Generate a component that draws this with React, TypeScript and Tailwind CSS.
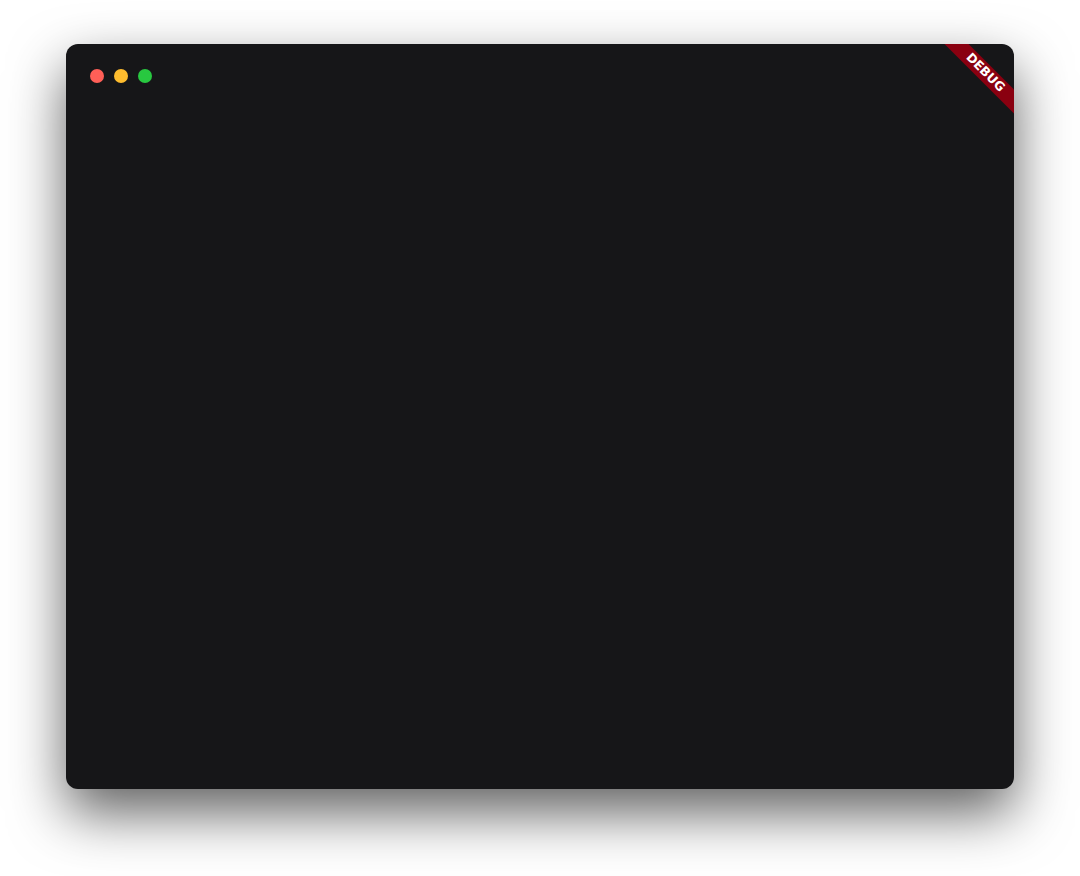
import React from "react";

export default function App() {
  return (
    <div className="w-[1080px] h-[876px] bg-white pt-[44px] pl-[66px]">
      <div className="relative w-[948px] h-[745px] rounded-[12px] overflow-hidden bg-[#161618] shadow-[0_24px_55px_rgba(0,0,0,0.62)]">
        <div className="flex gap-[10px] pt-[25px] pl-[24px]">
          <span className="w-[14px] h-[14px] rounded-full bg-[#ff5f57]" />
          <span className="w-[14px] h-[14px] rounded-full bg-[#febc2e]" />
          <span className="w-[14px] h-[14px] rounded-full bg-[#28c840]" />
        </div>
        <div
          className="absolute left-[861px] top-[22px] w-[120px] h-[17px] rotate-45 bg-[#8a0010] flex items-center justify-center pr-[5px] text-white font-bold text-[12.5px] leading-none"
          style={{ fontFamily: '"DejaVu Sans", sans-serif' }}
        >
          DEBUG
        </div>
      </div>
    </div>
  );
}
